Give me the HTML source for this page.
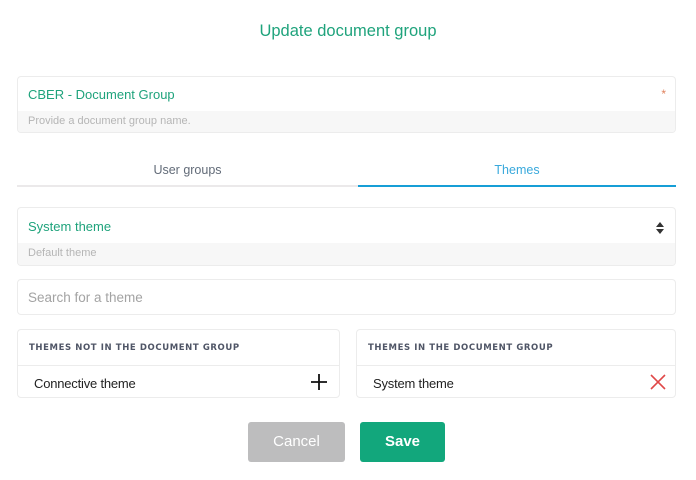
<!DOCTYPE html>
<html><head><style>
*{box-sizing:border-box;margin:0;padding:0}
body{width:696px;height:480px;background:#fff;font-family:"Liberation Sans",sans-serif;position:relative;overflow:hidden}
.a{position:absolute}
.box{border:1px solid #ececec;border-radius:4px;background:#fff;overflow:hidden}
.strip{position:absolute;left:0;right:0;bottom:0;background:#f7f7f7;color:#b5b5b5;font-size:11px;padding-left:10px}
.g{color:#1fa37c;font-size:13px}
.ph{font-weight:bold;letter-spacing:0.6px;color:#4f5566;font-family:"DejaVu Sans",sans-serif;font-size:8.5px}
.btn{border-radius:3px;color:#fff;font-size:15px;text-align:center;line-height:40px}
</style></head><body>
<div class="a" style="left:0;width:696px;top:22px;text-align:center;color:#1fa37c;font-size:16.5px">Update document group</div>

<div class="a box" style="left:17px;top:76px;width:659px;height:57px">
 <div class="a g" style="left:10px;top:10px">CBER - Document Group</div>
 <div class="a" style="right:9px;top:10px;color:#e0825d;font-size:12px">*</div>
 <div class="strip" style="height:21px;line-height:20px">Provide a document group name.</div>
</div>

<div class="a" style="left:17px;width:341px;top:163px;text-align:center;color:#626b78;font-size:12.5px">User groups</div>
<div class="a" style="left:358px;width:318px;top:163px;text-align:center;color:#39a9dc;font-size:12.5px">Themes</div>
<div class="a" style="left:17px;width:341px;top:185px;height:2px;background:#ebe9ea"></div>
<div class="a" style="left:358px;width:318px;top:185px;height:2px;background:#169ed6"></div>

<div class="a box" style="left:17px;top:207px;width:659px;height:59px">
 <div class="a g" style="left:10px;top:11px">System theme</div>
 <svg class="a" style="right:11px;top:14px" width="8" height="12"><path d="M4 0L8 5H0Z M4 12L8 7H0Z" fill="#333"/></svg>
 <div class="strip" style="height:22px;line-height:21px">Default theme</div>
</div>

<div class="a box" style="left:17px;top:279px;width:659px;height:36px">
 <div class="a" style="left:10px;top:10px;color:#a3a3a3;font-size:13.5px">Search for a theme</div>
</div>

<div class="a box" style="left:17px;top:329px;width:323px;height:69px">
 <div class="a ph" style="left:11px;top:13px">THEMES NOT IN THE DOCUMENT GROUP</div>
 <div class="a" style="left:0;right:0;top:35px;height:1px;background:#ececec"></div>
 <div class="a" style="left:16px;top:46px;font-size:13px;color:#222;letter-spacing:-0.2px">Connective theme</div>
 <svg class="a" style="left:293px;top:44px" width="16" height="16"><path d="M8 0V16M0 8H16" stroke="#111" stroke-width="1.8"/></svg>
</div>
<div class="a box" style="left:356px;top:329px;width:320px;height:69px">
 <div class="a ph" style="left:11px;top:13px">THEMES IN THE DOCUMENT GROUP</div>
 <div class="a" style="left:0;right:0;top:35px;height:1px;background:#ececec"></div>
 <div class="a" style="left:16px;top:46px;font-size:13px;color:#222;letter-spacing:-0.2px">System theme</div>
 <svg class="a" style="left:293px;top:44px" width="16" height="16"><path d="M1 1L15 15M15 1L1 15" stroke="#e04848" stroke-width="1.6"/></svg>
</div>

<div class="a btn" style="left:248px;top:422px;width:97px;height:40px;background:#bdbdbe">Cancel</div>
<div class="a btn" style="left:360px;top:422px;width:85px;height:40px;background:#12a77c;font-weight:bold">Save</div>
</body></html>
